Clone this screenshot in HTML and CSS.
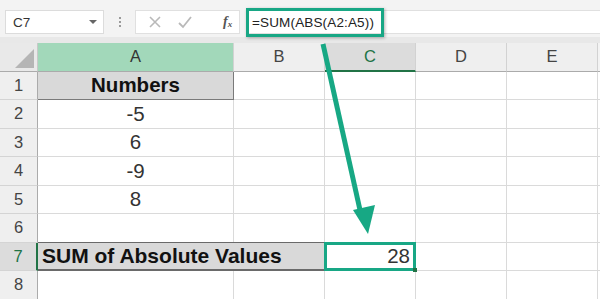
FILE: index.html
```html
<!DOCTYPE html>
<html>
<head>
<meta charset="utf-8">
<link rel="stylesheet" href="styles.css">
</head>
<body>
<div class="app">
  <div class="toolbar">
    <div class="namebox"><span class="name">C7</span><span class="caret"></span></div>
    <div class="sep"><span></span><span></span><span></span></div>
    <div class="btns">
      <svg class="ico" width="14" height="14" viewBox="0 0 14 14"><path d="M2 2 L12 12 M12 2 L2 12" stroke="#b9b9b9" stroke-width="1.6" fill="none"/></svg>
      <svg class="ico" width="16" height="14" viewBox="0 0 16 14"><path d="M2 8 L6 12 L14 2" stroke="#b9b9b9" stroke-width="1.8" fill="none"/></svg>
      <span class="fx">f<sub>x</sub></span>
    </div>
    <div class="formula">
      <span class="ftext">=SUM(ABS(A2:A5))</span>
      <div class="fhl"></div>
    </div>
  </div>
  <div class="sheet">
    <div class="corner"><span class="tri"></span></div>
    <div class="ch sel-green">A</div>
    <div class="ch">B</div>
    <div class="ch sel-col">C</div>
    <div class="ch">D</div>
    <div class="ch">E</div>
    <div class="ch end"></div>

    <div class="rh">1</div>
    <div class="c head">Numbers</div><div class="c"></div><div class="c"></div><div class="c"></div><div class="c"></div><div class="c end"></div>

    <div class="rh">2</div>
    <div class="c num">-5</div><div class="c"></div><div class="c"></div><div class="c"></div><div class="c"></div><div class="c end"></div>

    <div class="rh">3</div>
    <div class="c num">6</div><div class="c"></div><div class="c"></div><div class="c"></div><div class="c"></div><div class="c end"></div>

    <div class="rh">4</div>
    <div class="c num">-9</div><div class="c"></div><div class="c"></div><div class="c"></div><div class="c"></div><div class="c end"></div>

    <div class="rh">5</div>
    <div class="c num">8</div><div class="c"></div><div class="c"></div><div class="c"></div><div class="c"></div><div class="c end"></div>

    <div class="rh">6</div>
    <div class="c"></div><div class="c"></div><div class="c"></div><div class="c"></div><div class="c"></div><div class="c end"></div>

    <div class="rh sel-row">7</div>
    <div class="c label">SUM of Absolute Values</div><div class="c result">28<span class="handle"></span></div><div class="c"></div><div class="c"></div><div class="c end"></div>

    <div class="rh">8</div>
    <div class="c"></div><div class="c"></div><div class="c"></div><div class="c"></div><div class="c"></div><div class="c end"></div>
  </div>
  <svg class="arrow" width="600" height="299" viewBox="0 0 600 299">
    <path d="M323 44 L360 210" stroke="#17a884" stroke-width="5" fill="none"/>
    <path d="M353 210 L375 205 L368 234 Z" fill="#17a884"/>
  </svg>
</div>
</body>
</html>
```
FILE: styles.css
```css
* { box-sizing: border-box; }
html, body { margin: 0; padding: 0; }
body {
  width: 600px;
  height: 299px;
  overflow: hidden;
  background: #ffffff;
  font-family: "Liberation Sans", Arial, sans-serif;
}
.app { position: relative; width: 600px; height: 299px; }

.toolbar {
  height: 43px;
  display: flex;
  align-items: flex-start;
  padding: 10px 0 0 5px;
  background: linear-gradient(#f3f3f3 0, #f3f3f3 37px, #e8e8e8 37px);
}
.namebox {
  width: 99px;
  height: 24px;
  background: #fff;
  border: 1px solid #dcdcdc;
  display: flex;
  align-items: center;
  justify-content: space-between;
  padding: 0 6px 0 7px;
}
.name { font-size: 13.5px; color: #333; }
.caret {
  width: 0; height: 0;
  border-left: 4px solid transparent;
  border-right: 4px solid transparent;
  border-top: 4px solid #666;
}
.sep {
  width: 31px;
  height: 24px;
  display: flex;
  flex-direction: column;
  align-items: center;
  justify-content: center;
  gap: 2px;
}
.sep span { width: 2px; height: 2px; background: #9a9a9a; }
.btns {
  width: 105px;
  height: 24px;
  background: #fff;
  border: 1px solid #e0e0e0;
  display: flex;
  align-items: center;
  padding-left: 12px;
  gap: 15px;
}
.fx {
  margin-left: 15px;
  font-family: "Liberation Serif", serif;
  font-style: italic;
  font-weight: bold;
  font-size: 14px;
  color: #555;
}
.fx sub { font-size: 9px; vertical-align: -1px; }
.formula {
  position: relative;
  margin-left: 6px;
  flex: 1;
  height: 24px;
  background: #fff;
  border-top: 1px solid #e0e0e0;
  border-bottom: 1px solid #e0e0e0;
  display: flex;
  align-items: center;
  padding-left: 6px;
}
.ftext { font-size: 13.5px; letter-spacing: 0.15px; color: #222; }
.fhl {
  position: absolute;
  left: 0;
  top: -3px;
  width: 138px;
  height: 29px;
  border: 3px solid #18a785;
  box-shadow: 1px 1px 3px rgba(0,0,0,0.3);
}

.sheet {
  display: grid;
  grid-template-columns: 38px 196px 91px 91px 91px 91px 2px;
  grid-template-rows: 28.5px repeat(8, 28.5px);
}
.corner {
  position: relative;
  background: #e9e9e9;
  border-right: 1px solid #c8c8c8;
  border-bottom: 1px solid #ababab;
}
.tri {
  position: absolute;
  right: 3px;
  bottom: 3px;
  width: 0; height: 0;
  border-left: 19px solid transparent;
  border-bottom: 19px solid #b5b5b5;
}
.ch {
  background: #efefef;
  border-right: 1px solid #d2d2d2;
  border-bottom: 1px solid #ababab;
  display: flex;
  align-items: center;
  justify-content: center;
  font-size: 16.5px;
  color: #444;
}
.ch.sel-green { background: #a2d8ba; color: #333; }
.ch.sel-col { background: #dcdcdc; color: #217346; border-bottom: 2px solid #217346; }
.ch.end { border-right: none; background: #f3f3f3; }
.rh {
  background: #efefef;
  border-right: 1px solid #ababab;
  border-bottom: 1px solid #d4d4d4;
  display: flex;
  align-items: center;
  justify-content: center;
  font-size: 16.5px;
  color: #444;
}
.rh.sel-row { background: #dcdcdc; color: #217346; border-right: 2px solid #217346; }
.c {
  border-right: 1px solid #dadada;
  border-bottom: 1px solid #dadada;
  display: flex;
  align-items: center;
  font-size: 20.5px;
  color: #333;
}
.c.end { border-right: none; }
.c.num { justify-content: center; }
.c.head {
  justify-content: center;
  background: #d9d9d9;
  font-weight: bold;
  color: #111;
  border-right: 1px solid #7a7a7a;
  border-bottom: 1px solid #7a7a7a;
}
.c.label {
  grid-column: span 2;
  background: #d9d9d9;
  font-weight: bold;
  font-size: 21px;
  color: #111;
  padding-left: 4px;
  border-top: 1px solid #6a6a6a;
  border-bottom: 2px solid #6a6a6a;
  margin-top: -1px;
}
.c.result {
  position: relative;
  justify-content: flex-end;
  padding-right: 3px;
  border: 3px solid #18a785;
  margin: -1px 0 0 -1px;
}
.handle {
  position: absolute;
  right: -4px;
  bottom: -4px;
  width: 4px;
  height: 4px;
  background: #217346;
}
.arrow {
  position: absolute;
  left: 0;
  top: 0;
  pointer-events: none;
}
```
